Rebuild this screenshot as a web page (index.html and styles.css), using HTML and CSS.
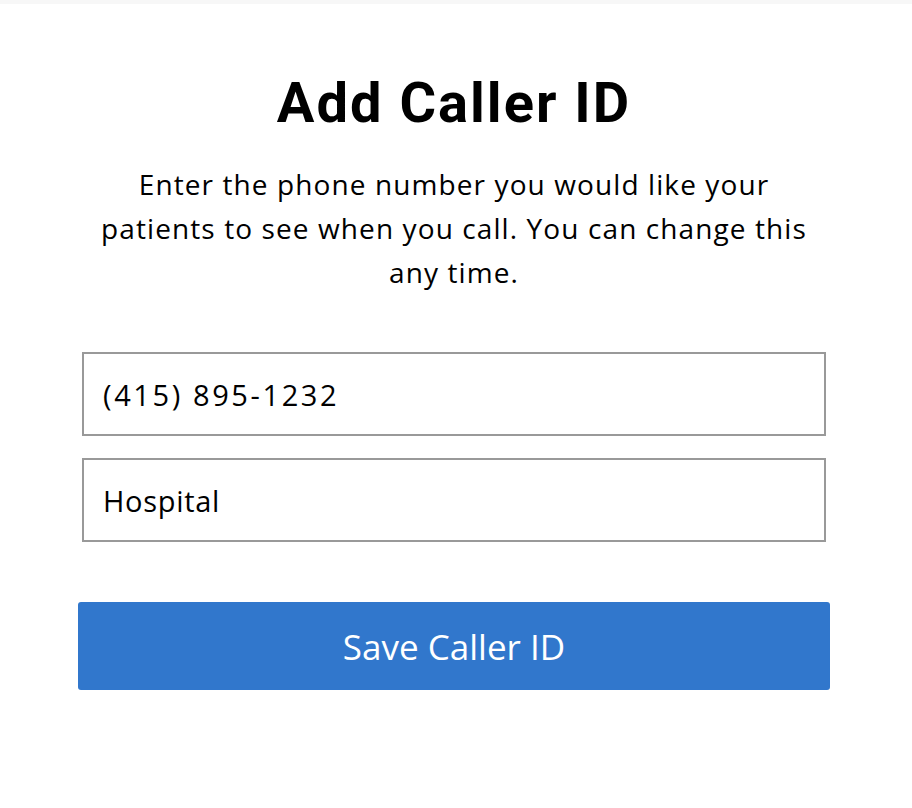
FILE: index.html
```html
<!DOCTYPE html>
<html lang="en">
<head>
<meta charset="utf-8">
<title>Add Caller ID</title>
<link rel="stylesheet" href="styles.css">
</head>
<body>
<div class="topbar"></div>
<main class="page">
  <h1 class="title">Add Caller ID</h1>
  <p class="intro">Enter the phone number you would like your patients to see when you call. You can change this any time.</p>
  <form class="form">
    <div class="fields">
      <input class="field field-phone" type="text" value="(415) 895-1232">
      <input class="field" type="text" value="Hospital">
    </div>
    <button class="save" type="button">Save Caller ID</button>
  </form>
</main>
</body>
</html>
```

FILE: styles.css
```css
html, body {
  margin: 0;
  padding: 0;
  background: #ffffff;
}
body {
  font-family: "Open Sans", "Liberation Sans", sans-serif;
  color: #000;
}
.topbar {
  height: 4px;
  background: #f7f7f7;
}
.page {
  width: 752px;
  margin: 0 0 0 78px;
  padding-top: 66px;
  display: flex;
  flex-direction: column;
  align-items: center;
}
.title {
  margin: 0;
  font-family: Roboto, "Liberation Sans", sans-serif;
  font-size: 56px;
  line-height: 67px;
  font-weight: 700;
  letter-spacing: 2px;
  text-align: center;
}
.intro {
  margin: 25px 0 0;
  width: 730px;
  font-size: 28px;
  line-height: 44px;
  letter-spacing: 1.1px;
  text-align: center;
}
.form {
  margin-top: 58px;
  width: 100%;
  display: flex;
  flex-direction: column;
  align-items: center;
}
.fields {
  width: 744px;
  display: flex;
  flex-direction: column;
  gap: 22px;
}
.field {
  box-sizing: border-box;
  height: 84px;
  width: 100%;
  border: 2px solid #999999;
  border-radius: 0;
  padding: 0 19px;
  font-family: inherit;
  font-size: 29px;
  letter-spacing: 0.7px;
  color: #000;
  background: #fff;
  outline: none;
}
.field-phone {
  letter-spacing: 2.6px;
}
.save {
  margin-top: 60px;
  width: 752px;
  height: 88px;
  border: 0;
  border-radius: 3px;
  background: #3177cc;
  color: #fff;
  font-family: inherit;
  font-size: 35px;
  cursor: pointer;
}
```
